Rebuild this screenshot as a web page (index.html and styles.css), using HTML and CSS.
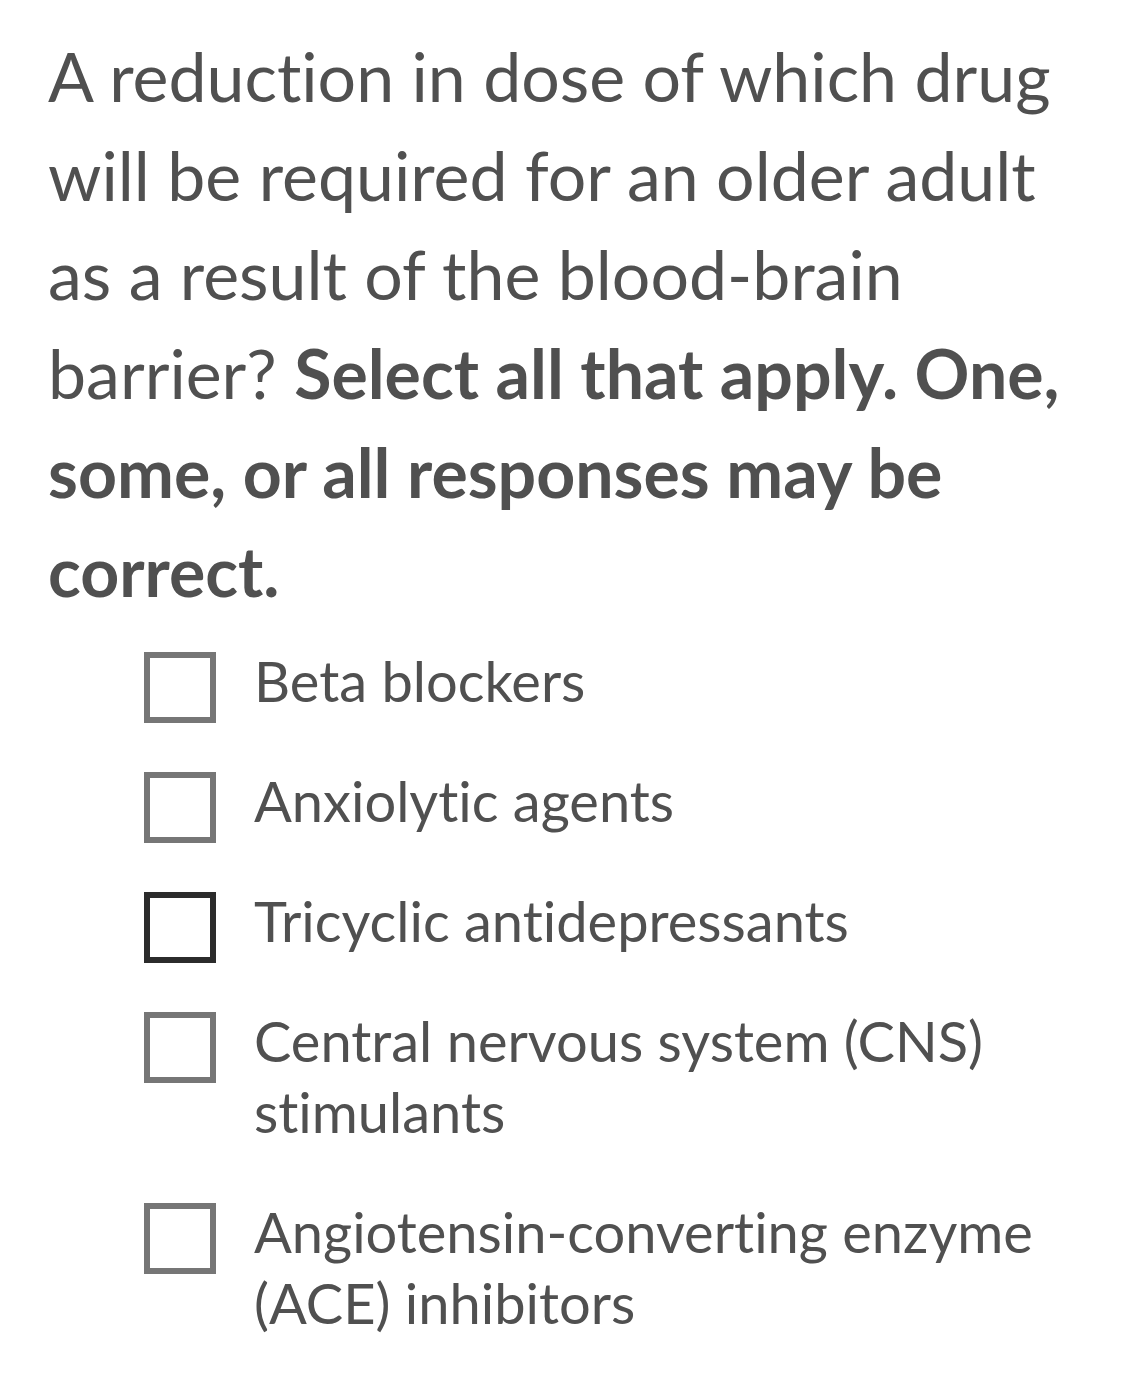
FILE: index.html
```html
<!DOCTYPE html>
<html lang="en">
<head>
<meta charset="utf-8">
<link rel="stylesheet" href="styles.css">
</head>
<body>
<main class="question">
  <p class="stem">A reduction in dose of which drug will be required for an older adult as a result of the blood-brain barrier? <strong>Select all that apply. One, some, or all responses may be correct.</strong></p>
  <ul class="options">
    <li class="option"><span class="box"></span><span class="label">Beta blockers</span></li>
    <li class="option"><span class="box"></span><span class="label">Anxiolytic agents</span></li>
    <li class="option"><span class="box focused"></span><span class="label">Tricyclic antidepressants</span></li>
    <li class="option"><span class="box"></span><span class="label">Central nervous system (CNS) stimulants</span></li>
    <li class="option"><span class="box"></span><span class="label">Angiotensin-converting enzyme (ACE) inhibitors</span></li>
  </ul>
</main>
</body>
</html>
```
FILE: styles.css
```css
html, body {
  margin: 0;
  padding: 0;
  background: #ffffff;
}
body {
  font-family: "Lato", "Open Sans", sans-serif;
  color: #505050;
  font-variant-ligatures: none;
}
.question {
  padding: 26px 50px 0 48px;
}
.stem {
  margin: 0;
  font-size: 68px;
  line-height: 99px;
}
.stem strong {
  font-weight: 700;
}
.options {
  list-style: none;
  margin: 25px 0 0 0;
  padding: 0 0 0 96px;
  display: flex;
  flex-direction: column;
  gap: 49px;
}
.option {
  display: flex;
  align-items: flex-start;
  gap: 38px;
}
.box {
  flex: none;
  width: 60px;
  height: 59px;
  border: 6px solid #767676;
  margin-top: 7px;
  margin-bottom: -7px;
}
.box.focused {
  border-color: #2b2b2b;
}
.label {
  font-size: 56px;
  line-height: 71px;
}
```
